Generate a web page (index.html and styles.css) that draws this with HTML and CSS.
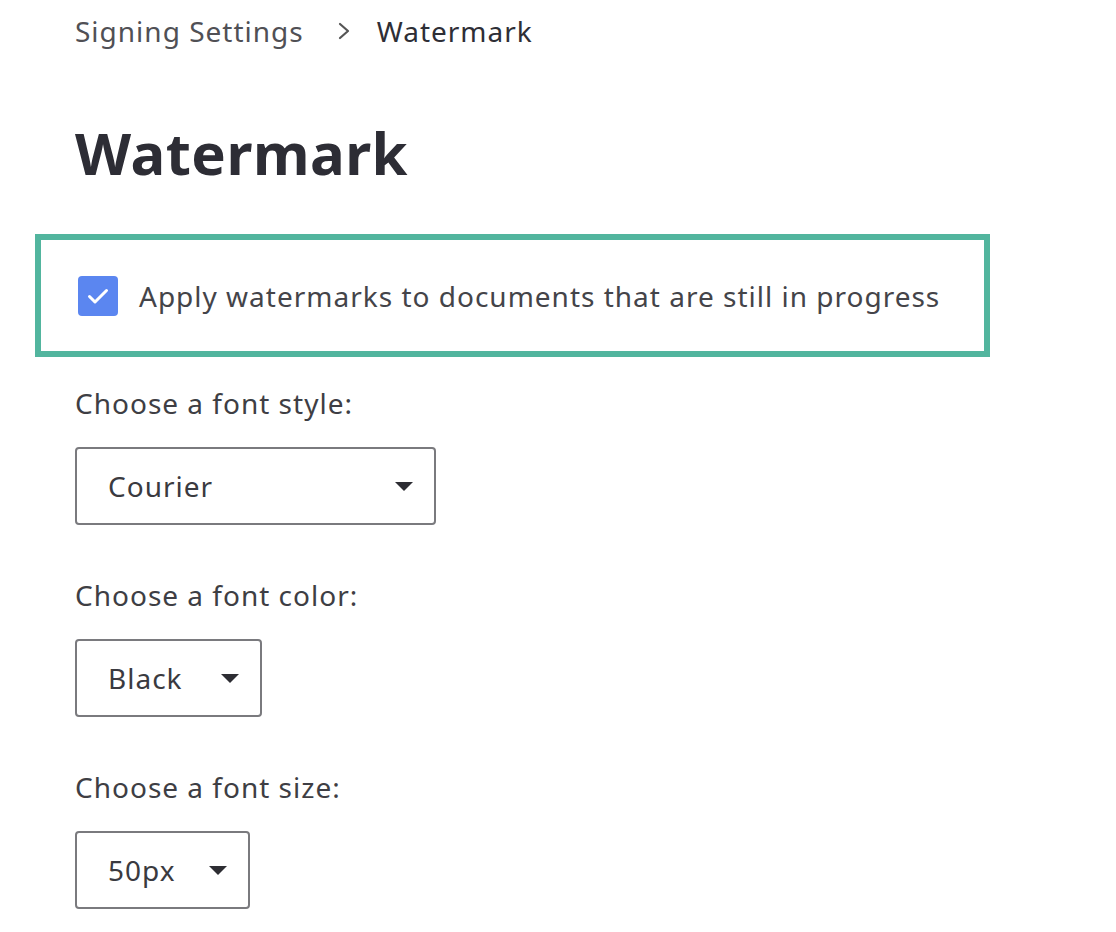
FILE: index.html
```html
<!DOCTYPE html>
<html>
<head>
<meta charset="utf-8">
<link rel="stylesheet" href="styles.css">
</head>
<body>
<main class="page">
  <nav class="crumbs">
    <span class="crumb">Signing Settings</span>
    <svg class="sep" viewBox="0 0 16 20" width="16" height="20"><polyline points="4,3 12,10 4,17" fill="none" stroke="#555" stroke-width="2.2" stroke-linecap="round" stroke-linejoin="round"/></svg>
    <span class="crumb current">Watermark</span>
  </nav>
  <h1 class="title">Watermark</h1>
  <div class="highlight">
    <label class="check-row">
      <span class="checkbox">
        <svg viewBox="0 0 40 40" width="40" height="40"><polyline points="11.5,20.5 17,26 28.5,14.5" fill="none" stroke="#fff" stroke-width="3" stroke-linecap="round" stroke-linejoin="round"/></svg>
      </span>
      <span class="check-label">Apply watermarks to documents that are still in progress</span>
    </label>
  </div>
  <div class="field">
    <div class="field-label">Choose a font style:</div>
    <div class="select w-style"><span>Courier</span><span class="caret"></span></div>
  </div>
  <div class="field">
    <div class="field-label">Choose a font color:</div>
    <div class="select w-color"><span>Black</span><span class="caret"></span></div>
  </div>
  <div class="field">
    <div class="field-label">Choose a font size:</div>
    <div class="select w-size"><span>50px</span><span class="caret"></span></div>
  </div>
</main>
</body>
</html>
```
FILE: styles.css
```css
* { box-sizing: border-box; }
html, body { margin: 0; background: #fff; }
body {
  font-family: "Noto Sans", "Lato", sans-serif;
  color: #3a3a40;
  letter-spacing: 1px;
}
.page {
  padding: 8px 0 0 35px;
  width: 1116px;
}
.crumbs {
  margin-left: 40px;
  display: flex;
  align-items: center;
  font-size: 28px;
  line-height: 46px;
  color: #505055;
}
.sep { margin: 0 25px 0 32px; }
.crumb.current { color: #2e2e36; }
.title {
  margin: 60px 0 0 40px;
  font-size: 58px;
  line-height: 78px;
  font-weight: 700;
  letter-spacing: 0.5px;
  color: #2d2d35;
}
.highlight {
  margin-top: 42px;
  width: 955px;
  height: 123px;
  border: 6px solid #52b59e;
  display: flex;
  align-items: center;
  padding-left: 37px;
}
.check-row { display: flex; align-items: center; }
.checkbox {
  width: 40px; height: 40px;
  background: #5b86f0;
  border-radius: 4px;
  display: flex;
}
.check-label {
  margin-left: 21px;
  font-size: 28px;
  color: #444449;
}
.field { margin-left: 40px; }
.field-label {
  margin-top: 24px;
  font-size: 28px;
  line-height: 44px;
  color: #3e3e44;
}
.select {
  margin-top: 22px;
  height: 78px;
  border: 2px solid #7a7a7e;
  border-radius: 4px;
  display: flex;
  align-items: center;
  justify-content: space-between;
  padding: 0 21px 0 31px;
  font-size: 28px;
  color: #3a3a40;
}
.field + .field .field-label { margin-top: 48px; }
.w-style { width: 361px; }
.w-color { width: 187px; }
.w-size { width: 175px; }
.caret {
  width: 0; height: 0;
  border-left: 9px solid transparent;
  border-right: 9px solid transparent;
  border-top: 9px solid #2d2d33;
}
```
